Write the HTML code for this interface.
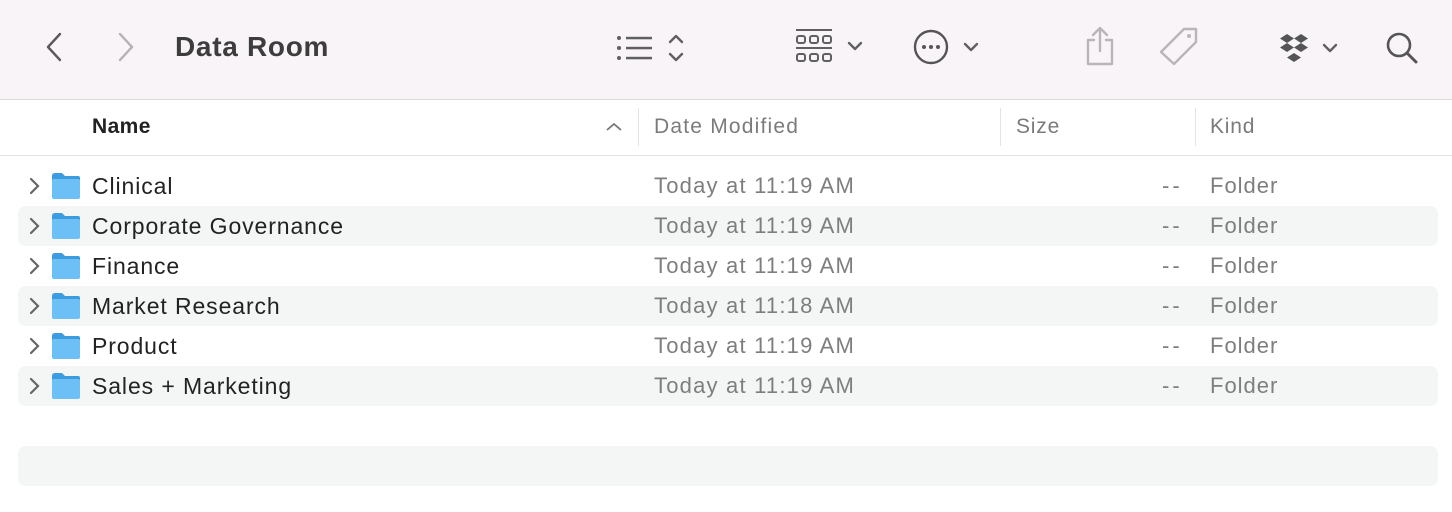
<!DOCTYPE html>
<html><head><style>
*{margin:0;padding:0;box-sizing:border-box}
body{width:1452px;height:512px;background:#fff;font-family:"Liberation Sans",Arial,sans-serif;position:relative;overflow:hidden}
.tb{position:absolute;left:0;top:0;width:1452px;height:100px;background:#f9f4f8;border-bottom:1px solid #dcdadb}
.t{position:absolute;white-space:nowrap}
.hdr{position:absolute;left:0;top:101px;width:1452px;height:55px;border-bottom:1px solid #e2e2e2}
.sep{position:absolute;top:108px;width:1px;height:38px;background:#e4e4e4}
.row{position:absolute;left:18px;width:1420px;height:40px;border-radius:7px}
.row.s{background:#f4f5f5}
.name{position:absolute;left:92px;font-size:23px;color:#222;letter-spacing:0.9px;white-space:nowrap}
.date{position:absolute;left:654px;font-size:22px;color:#7e7e7e;letter-spacing:1.2px;white-space:nowrap}
.dd{position:absolute;left:1162px;font-size:22px;color:#7e7e7e;letter-spacing:3px}
.kind{position:absolute;left:1210px;font-size:22px;color:#7e7e7e;letter-spacing:1px}
svg{position:absolute}
.r{position:absolute;left:0;width:1452px;height:40px}
.r .name,.r .date,.r .dd,.r .kind{top:7px}
.ch{left:28px;top:11px}
.fd{left:51px;top:6px}
</style></head><body>
<div class="tb">
<svg style="left:42px;top:32px" width="24" height="30" viewBox="0 0 24 30"><path d="M18 2 L6 15 L18 28" stroke="#5a5a5a" stroke-width="2.4" fill="none" stroke-linecap="round" stroke-linejoin="round"/></svg>
<svg style="left:114px;top:32px" width="24" height="30" viewBox="0 0 24 30"><path d="M6 2 L18 15 L6 28" stroke="#b5b3b5" stroke-width="2.4" fill="none" stroke-linecap="round" stroke-linejoin="round"/></svg>
<div class="t" style="left:175px;top:31px;font-size:28px;font-weight:bold;color:#3d3d3d;letter-spacing:0.7px">Data Room</div>
<svg style="left:616px;top:34px" width="76" height="30" viewBox="0 0 76 30"><g fill="#606060"><circle cx="3" cy="4" r="2"/><circle cx="3" cy="14" r="2"/><circle cx="3" cy="24" r="2"/><rect x="10" y="2.8" width="26" height="2.5"/><rect x="10" y="12.8" width="26" height="2.5"/><rect x="10" y="22.8" width="26" height="2.5"/></g><path d="M54 8 L60 2 L66 8 M54 20 L60 26 L66 20" stroke="#606060" stroke-width="2.4" fill="none" stroke-linecap="round" stroke-linejoin="round"/></svg>
<svg style="left:794px;top:28px" width="74" height="38" viewBox="0 0 74 38"><g stroke="#606060" stroke-width="2" fill="none"><line x1="2" y1="2" x2="38" y2="2"/><line x1="2" y1="20" x2="38" y2="20"/><rect x="3" y="8" width="8" height="7" rx="2"/><rect x="16" y="8" width="8" height="7" rx="2"/><rect x="29" y="8" width="8" height="7" rx="2"/><rect x="3" y="26" width="8" height="7" rx="2"/><rect x="16" y="26" width="8" height="7" rx="2"/><rect x="29" y="26" width="8" height="7" rx="2"/></g><path d="M55 15 L61 21 L67 15" stroke="#606060" stroke-width="2.4" fill="none" stroke-linecap="round" stroke-linejoin="round"/></svg>
<svg style="left:912px;top:29px" width="72" height="36" viewBox="0 0 72 36"><circle cx="19" cy="18" r="16" stroke="#555" stroke-width="2.4" fill="none"/><g fill="#555"><circle cx="12" cy="18" r="2"/><circle cx="19" cy="18" r="2"/><circle cx="26" cy="18" r="2"/></g><path d="M53 15 L59 21 L65 15" stroke="#606060" stroke-width="2.4" fill="none" stroke-linecap="round" stroke-linejoin="round"/></svg>
<svg style="left:1082px;top:25px" width="36" height="42" viewBox="0 0 36 42"><path d="M12 15 H6 V39 H30 V15 H24 M18 3 V26 M11 10 L18 3 L25 10" stroke="#b8b6b8" stroke-width="2.4" fill="none" stroke-linecap="round" stroke-linejoin="round"/></svg>
<svg style="left:1156px;top:26px" width="46" height="42" viewBox="0 0 46 42"><path d="M28 3 H40 V16 L18 38 L5 26 Z" stroke="#b8b6b8" stroke-width="2.4" fill="none" stroke-linejoin="round"/><circle cx="33" cy="10" r="2" fill="#b8b6b8"/></svg>
<svg style="left:1278px;top:32px" width="66" height="32" viewBox="0 0 66 32"><g fill="#555"><path d="M9 2 L16 6.5 L9 11 L2 6.5Z"/><path d="M23 2 L30 6.5 L23 11 L16 6.5Z"/><path d="M9 11 L16 15.5 L9 20 L2 15.5Z"/><path d="M23 11 L30 15.5 L23 20 L16 15.5Z"/><path d="M16 21 L23 25.5 L16 30 L9 25.5Z"/></g><path d="M46 13 L52 19 L58 13" stroke="#606060" stroke-width="2.4" fill="none" stroke-linecap="round" stroke-linejoin="round"/></svg>
<svg style="left:1384px;top:30px" width="38" height="36" viewBox="0 0 38 36"><circle cx="15" cy="15" r="11" stroke="#555" stroke-width="2.6" fill="none"/><line x1="23" y1="23" x2="32" y2="32" stroke="#555" stroke-width="3" stroke-linecap="round"/></svg>
</div>
<div class="hdr">
<div class="t" style="left:92px;top:14px;font-size:21px;font-weight:bold;color:#222;letter-spacing:0.4px">Name</div>
<svg style="left:605px;top:20px" width="18" height="12" viewBox="0 0 18 12"><path d="M2 9 L9 3 L16 9" stroke="#777" stroke-width="1.8" fill="none"/></svg>
<div class="t" style="left:654px;top:14px;font-size:21px;color:#7b7b7b;letter-spacing:1.2px">Date Modified</div>
<div class="t" style="left:1016px;top:14px;font-size:21px;color:#7b7b7b;letter-spacing:0.8px">Size</div>
<div class="t" style="left:1210px;top:14px;font-size:21px;color:#7b7b7b;letter-spacing:0.8px">Kind</div>
</div>
<div class="sep" style="left:638px"></div>
<div class="sep" style="left:1000px"></div>
<div class="sep" style="left:1195px"></div>

<div class="row s" style="top:206px"></div>
<div class="row s" style="top:286px"></div>
<div class="row s" style="top:366px"></div>
<div class="row s" style="top:446px"></div>

<div class="r" style="top:166px"><svg class="ch" width="14" height="18" viewBox="0 0 14 18"><path d="M3 2 L10 9 L3 16" stroke="#666" stroke-width="2.2" fill="none" stroke-linecap="round"/></svg><svg class="fd" width="30" height="28" viewBox="0 0 30 28"><path d="M1 4 Q1 1 4 1 H11 L14 4 H27 Q29 4 29 6 V8 H1Z" fill="#3d9be0"/><rect x="1" y="7" width="28" height="20" rx="2" fill="#6cc0f5"/></svg><div class="name">Clinical</div><div class="date">Today at 11:19 AM</div><div class="dd">--</div><div class="kind">Folder</div></div>
<div class="r" style="top:206px"><svg class="ch" width="14" height="18" viewBox="0 0 14 18"><path d="M3 2 L10 9 L3 16" stroke="#666" stroke-width="2.2" fill="none" stroke-linecap="round"/></svg><svg class="fd" width="30" height="28" viewBox="0 0 30 28"><path d="M1 4 Q1 1 4 1 H11 L14 4 H27 Q29 4 29 6 V8 H1Z" fill="#3d9be0"/><rect x="1" y="7" width="28" height="20" rx="2" fill="#6cc0f5"/></svg><div class="name">Corporate Governance</div><div class="date">Today at 11:19 AM</div><div class="dd">--</div><div class="kind">Folder</div></div>
<div class="r" style="top:246px"><svg class="ch" width="14" height="18" viewBox="0 0 14 18"><path d="M3 2 L10 9 L3 16" stroke="#666" stroke-width="2.2" fill="none" stroke-linecap="round"/></svg><svg class="fd" width="30" height="28" viewBox="0 0 30 28"><path d="M1 4 Q1 1 4 1 H11 L14 4 H27 Q29 4 29 6 V8 H1Z" fill="#3d9be0"/><rect x="1" y="7" width="28" height="20" rx="2" fill="#6cc0f5"/></svg><div class="name">Finance</div><div class="date">Today at 11:19 AM</div><div class="dd">--</div><div class="kind">Folder</div></div>
<div class="r" style="top:286px"><svg class="ch" width="14" height="18" viewBox="0 0 14 18"><path d="M3 2 L10 9 L3 16" stroke="#666" stroke-width="2.2" fill="none" stroke-linecap="round"/></svg><svg class="fd" width="30" height="28" viewBox="0 0 30 28"><path d="M1 4 Q1 1 4 1 H11 L14 4 H27 Q29 4 29 6 V8 H1Z" fill="#3d9be0"/><rect x="1" y="7" width="28" height="20" rx="2" fill="#6cc0f5"/></svg><div class="name">Market Research</div><div class="date">Today at 11:18 AM</div><div class="dd">--</div><div class="kind">Folder</div></div>
<div class="r" style="top:326px"><svg class="ch" width="14" height="18" viewBox="0 0 14 18"><path d="M3 2 L10 9 L3 16" stroke="#666" stroke-width="2.2" fill="none" stroke-linecap="round"/></svg><svg class="fd" width="30" height="28" viewBox="0 0 30 28"><path d="M1 4 Q1 1 4 1 H11 L14 4 H27 Q29 4 29 6 V8 H1Z" fill="#3d9be0"/><rect x="1" y="7" width="28" height="20" rx="2" fill="#6cc0f5"/></svg><div class="name">Product</div><div class="date">Today at 11:19 AM</div><div class="dd">--</div><div class="kind">Folder</div></div>
<div class="r" style="top:366px"><svg class="ch" width="14" height="18" viewBox="0 0 14 18"><path d="M3 2 L10 9 L3 16" stroke="#666" stroke-width="2.2" fill="none" stroke-linecap="round"/></svg><svg class="fd" width="30" height="28" viewBox="0 0 30 28"><path d="M1 4 Q1 1 4 1 H11 L14 4 H27 Q29 4 29 6 V8 H1Z" fill="#3d9be0"/><rect x="1" y="7" width="28" height="20" rx="2" fill="#6cc0f5"/></svg><div class="name">Sales + Marketing</div><div class="date">Today at 11:19 AM</div><div class="dd">--</div><div class="kind">Folder</div></div>
</body></html>
